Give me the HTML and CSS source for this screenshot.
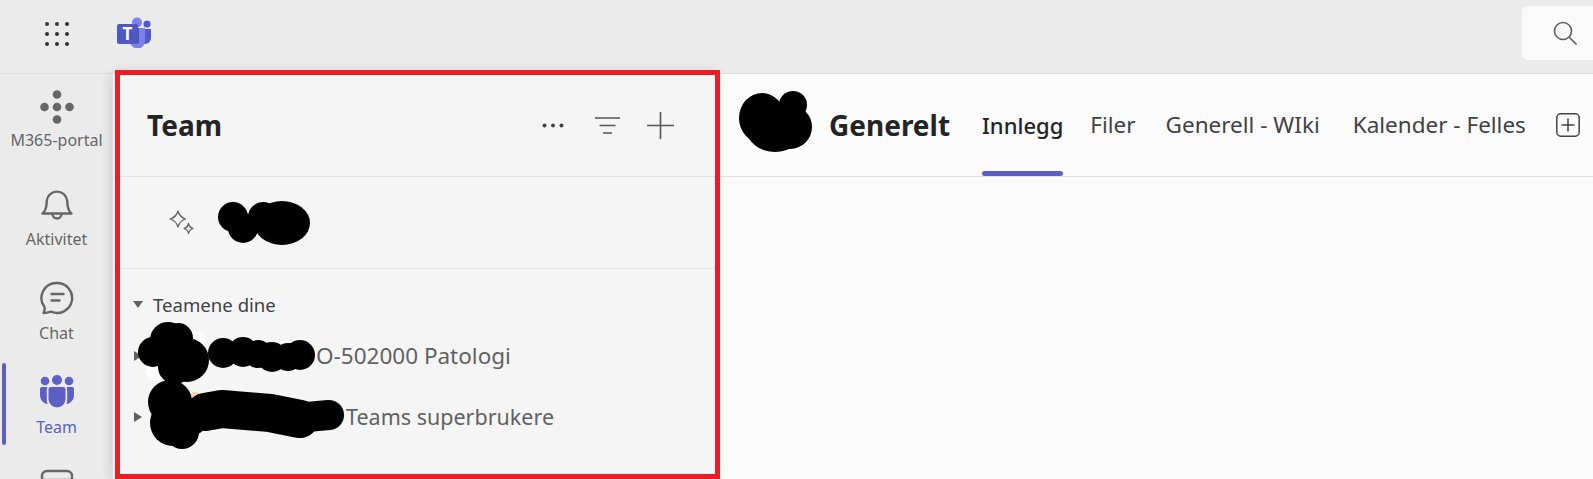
FILE: index.html
```html
<!DOCTYPE html>
<html lang="no">
<head>
<meta charset="utf-8">
<title>Microsoft Teams</title>
<link rel="stylesheet" href="styles.css">
</head>
<body>
<div class="app">
  <header class="topbar">
    <svg class="waffle" width="24" height="24" viewBox="0 0 24 24" fill="#333"><circle cx="2" cy="2" r="2"/><circle cx="12" cy="2" r="2"/><circle cx="22" cy="2" r="2"/><circle cx="2" cy="12" r="2"/><circle cx="12" cy="12" r="2"/><circle cx="22" cy="12" r="2"/><circle cx="2" cy="22" r="2"/><circle cx="12" cy="22" r="2"/><circle cx="22" cy="22" r="2"/></svg>
    <svg class="logo" width="35" height="31" viewBox="0 0 35 31"><circle cx="30" cy="7" r="3.600" fill="#5059c9"/><path d="M23 12h11v9a6 6 0 0 1-6 6h-5z" fill="#5059c9"/><circle cx="20" cy="5.500" r="5" fill="#7b83eb"/><path d="M11 11h17v12a7.500 7.500 0 0 1-15 2z" fill="#7b83eb"/><path d="M11 11h11v14a2 2 0 0 1-2 2h-7z" fill="#4b53bc"/><rect x="0" y="7" width="21" height="20" rx="2" fill="#4f57c0"/><text class="logo-t" x="10.500" y="23" text-anchor="middle">T</text></svg>
    <div class="search">
      <svg width="24" height="24" viewBox="0 0 24 24" fill="none" stroke="#616161" stroke-width="1.600"><circle cx="10" cy="10" r="8.500"/><path d="M16 16l7.500 7.500"/></svg>
    </div>
  </header>
  <div class="body">
    <nav class="rail">
      <div class="rail-item rail-item-first">
        <svg class="rail-icon" width="34" height="34" viewBox="0 0 34 34" fill="#666"><circle cx="17" cy="4.500" r="4.300"/><circle cx="4.500" cy="17" r="4.300"/><circle cx="17" cy="17" r="4.300"/><circle cx="29.500" cy="17" r="4.300"/><circle cx="17" cy="29.500" r="4.300"/></svg>
        <span class="rail-label">M365-portal</span>
      </div>
      <div class="rail-item">
        <svg class="rail-icon" width="34" height="34" viewBox="0 0 34 34" fill="none" stroke="#666" stroke-width="2.400" stroke-linejoin="round"><path d="M2.500 26.500c2-1.500 3.500-4 4-9l.3-4a10.300 10.300 0 0 1 20.400 0l.3 4c.5 5 2 7.500 4 9z"/><path d="M12.500 27a4.500 4.500 0 0 0 9 0"/></svg>
        <span class="rail-label">Aktivitet</span>
      </div>
      <div class="rail-item">
        <svg class="rail-icon" width="34" height="34" viewBox="0 0 34 34" fill="none" stroke="#666" stroke-width="2.400" stroke-linecap="round" stroke-linejoin="round"><path d="M17 2a15 15 0 1 1-6 28.700c-2 .7-5 1.300-7.500 1.300 1-2 1.500-4 1-6A15 15 0 0 1 17 2z"/><path d="M11.500 13h12M11.500 19.500h8"/></svg>
        <span class="rail-label">Chat</span>
      </div>
      <div class="rail-item rail-item-active">
        <svg class="rail-icon" width="34" height="34" viewBox="0 0 34 34" fill="#5b5fc7"><circle cx="5" cy="6" r="4.300"/><circle cx="17" cy="5" r="5"/><circle cx="29" cy="6" r="4.300"/><path d="M0 14a2 2 0 0 1 2-2h5.500c-.5 1-.7 2-.7 3v10c0 1.500.2 2.500.7 4C3 28.500 0 24.500 0 20z"/><path d="M34 14a2 2 0 0 0-2-2h-5.500c.5 1 .7 2 .7 3v10c0 1.500-.2 2.500-.7 4 4.500-.5 7.500-4.500 7.500-9z"/><path d="M11 12h12a2.500 2.500 0 0 1 2.500 2.500V24a8.500 8.500 0 0 1-17 0v-9.500A2.500 2.500 0 0 1 11 12z"/></svg>
        <span class="rail-label">Team</span>
      </div>
      <div class="rail-item rail-item-last">
        <svg class="rail-icon" width="34" height="34" viewBox="0 0 34 34" fill="none" stroke="#666" stroke-width="2.400"><rect x="2" y="3" width="30" height="28" rx="5"/><path d="M2 12h30"/></svg>
      </div>
    </nav>
    <aside class="panel">
      <div class="panel-head">
        <h1 class="panel-title">Team</h1>
        <div class="panel-actions">
          <svg width="22" height="5" viewBox="0 0 22 5" fill="#444"><circle cx="2.500" cy="2.500" r="2"/><circle cx="11" cy="2.500" r="2"/><circle cx="19.500" cy="2.500" r="2"/></svg>
          <svg class="action-filter" width="25" height="17" viewBox="0 0 25 17" stroke="#555" stroke-width="1.600"><path d="M0 1h25M4.500 8.500h16M8 16h9"/></svg>
          <svg class="action-plus" width="27" height="27" viewBox="0 0 27 27" stroke="#555" stroke-width="1.600"><path d="M0 13.500h27M13.500 0v27"/></svg>
        </div>
      </div>
      <div class="panel-feature">
        <svg width="25" height="25" viewBox="0 0 25 25" fill="none" stroke="#666" stroke-width="1.300" stroke-linejoin="round"><path d="M9 1c1 4 3 6.500 7.500 8C12 10.500 10 13 9 17 8 13 6 10.500 1 9c5-1.500 7-4 8-8z"/><path d="M19.500 13.500c.5 2.500 1.500 4 4.500 5-3 1-4 2-4.500 5-.5-3-1.500-4-4.500-5 3-1 4-2.500 4.500-5z"/></svg>
      </div>
      <div class="teams">
        <div class="section-row"><span class="tri-down"></span><span class="section-name">Teamene dine</span></div>
        <div class="team-row team-row-a"><span class="tri-right"></span><span class="team-name">O-502000 Patologi</span></div>
        <div class="team-row team-row-b"><span class="tri-right"></span><span class="team-name">Teams superbrukere</span></div>
      </div>
    </aside>
    <main class="main">
      <div class="main-head">
        <h2 class="channel">Generelt</h2>
        <div class="tabs">
          <div class="tab tab-active">Innlegg</div>
          <div class="tab tab-files">Filer</div>
          <div class="tab">Generell - WIki</div>
          <div class="tab tab-calendar">Kalender - Felles</div>
          <svg class="tab-add" width="24" height="24" viewBox="0 0 24 24" fill="none" stroke="#444" stroke-width="1.500"><rect x=".8" y=".8" width="22.400" height="22.400" rx="4"/><path d="M5.500 12h13M12 5.500v13"/></svg>
        </div>
      </div>
    </main>
  </div>
</div>
<svg class="scribbles" width="1593" height="479" viewBox="0 0 1593 479" aria-hidden="true">
  <g fill="#fff"><rect x="756" y="135" width="52" height="17"/><circle cx="197" cy="339" r="8"/><circle cx="155" cy="372" r="9"/></g>
  <g fill="#ecd9b0"><circle cx="195" cy="399" r="7"/><circle cx="155" cy="414" r="5"/></g>
  <g>
    <ellipse cx="762" cy="118" rx="23" ry="25"/><circle cx="793" cy="105" r="14"/><circle cx="790" cy="127" r="22"/><ellipse cx="775" cy="130" rx="28" ry="22"/>
    <circle cx="233" cy="217" r="15"/><circle cx="243" cy="228" r="15"/><circle cx="263" cy="217" r="15"/><ellipse cx="282" cy="223" rx="28" ry="22"/>
    <circle cx="168" cy="340" r="18"/><circle cx="178" cy="338" r="15"/><circle cx="153" cy="352" r="15"/><circle cx="187" cy="360" r="22"/><circle cx="175" cy="367" r="17"/>
    <circle cx="223" cy="353" r="15"/><circle cx="243" cy="352" r="15"/><circle cx="258" cy="354" r="14"/><circle cx="272" cy="357" r="15"/><circle cx="288" cy="357" r="14"/><circle cx="300" cy="355" r="15"/>
    <circle cx="170" cy="402" r="22"/><circle cx="173" cy="423" r="23"/><circle cx="182" cy="432" r="17"/><circle cx="190" cy="418" r="18"/>
  </g>
  <path class="band band-b" d="M205 412L222 409L270 413L300 419"/>
  <path class="band band-c" d="M295 418L329 415"/>
</svg>
<div class="highlight"></div>
</body>
</html>
```

FILE: styles.css
```css
* { box-sizing: border-box; }
html, body { margin: 0; height: 479px; overflow: hidden; }
body {
  position: relative;
  font-family: "Noto Sans", "Open Sans", sans-serif;
  color: #242424;
  background: #fafafa;
}
.app { display: flex; flex-direction: column; height: 479px; overflow: hidden; }

.topbar {
  flex: none;
  height: 74px;
  display: flex;
  align-items: flex-start;
  background: #ebebeb;
  border-bottom: 1px solid #dcdcdc;
}
.waffle { margin: 22px 0 0 45px; }
.logo { margin: 17px 0 0 48px; }
.logo-t { font: 700 17px "Noto Sans", sans-serif; fill: #fff; }
.search {
  margin: 6px 0 0 auto;
  width: 71px;
  height: 54px;
  padding: 15px 0 0 31px;
  background: #fafafa;
  border-radius: 6px 0 0 6px;
}

.body { flex: 1; display: flex; min-height: 0; }

.rail {
  flex: none;
  width: 113px;
  height: 405px;
  overflow: hidden;
  background: #ebebeb;
  padding-top: 16px;
  display: flex;
  flex-direction: column;
}
.rail-item {
  position: relative;
  height: 94px;
  flex: none;
  display: flex;
  flex-direction: column;
  align-items: center;
  color: #666;
}
.rail-item-first { height: 97px; }
.rail-item-last { height: 34px; margin-top: -1px; }
.rail-icon { flex: none; }
.rail-label { font-size: 16px; line-height: 20px; margin-top: 8px; }
.rail-item-first .rail-label { margin-top: 6px; }
.rail-item-active { color: #5b5fc7; }
.rail-item-active::before {
  content: "";
  position: absolute;
  left: 2px;
  top: -12px;
  width: 4px;
  height: 82px;
  border-radius: 2px;
  background: #5b5fc7;
}

.panel {
  flex: none;
  width: 602px;
  background: #f5f5f5;
  box-shadow: 0 0 12px rgba(0, 0, 0, .18);
  position: relative;
}
.panel-head {
  height: 103px;
  padding: 0 41px 0 34px;
  display: flex;
  align-items: center;
  justify-content: space-between;
  border-bottom: 1px solid #e0e0e0;
}
.panel-title { margin: 0; font-size: 28px; font-weight: 700; line-height: 38px; }
.panel-actions { display: flex; align-items: center; }
.action-filter { margin-left: 31px; }
.action-plus { margin-left: 27px; }
.panel-feature {
  height: 92px;
  padding: 33px 0 0 56px;
  border-bottom: 1px solid #e0e0e0;
}
.panel-feature svg { display: block; }
.teams { padding-top: 19px; }
.section-row { height: 32px; display: flex; align-items: center; padding-left: 20px; }
.section-name { font-size: 18.600px; margin-left: 10px; color: #424242; }
.tri-down {
  width: 0; height: 0;
  border-left: 5.500px solid transparent;
  border-right: 5.500px solid transparent;
  border-top: 7px solid #616161;
}
.tri-right {
  width: 0; height: 0;
  border-top: 5.500px solid transparent;
  border-bottom: 5.500px solid transparent;
  border-left: 8px solid #616161;
  flex: none;
}
.team-row { display: flex; align-items: center; height: 61px; padding-left: 21px; color: #616161; }
.team-row-a { margin-top: 5px; }
.team-row-a .team-name { margin-left: 174px; font-size: 22.500px; }
.team-row-b .team-name { margin-left: 204px; font-size: 21.500px; }

.main { flex: 1; min-width: 0; background: #fbfbfb; }
.main-head {
  height: 103px;
  padding: 0 0 0 114px;
  display: flex;
  align-items: center;
  border-bottom: 1px solid #e0e0e0;
}
.channel { margin: 0 32px 0 0; font-size: 28px; font-weight: 700; line-height: 38px; white-space: nowrap; }
.tabs { display: flex; align-items: center; gap: 30px; }
.tab {
  position: relative;
  font-size: 22.500px;
  line-height: 32px;
  color: #424242;
  white-space: nowrap;
}
.tab-files { margin-left: -3px; }
.tab-calendar { margin-left: 3px; }
.tab-active { font-size: 22px; font-weight: 500; color: #242424; }
.tab-active::after {
  content: "";
  position: absolute;
  left: 0;
  right: 0;
  bottom: -35px;
  height: 5px;
  border-radius: 3px;
  background: #5b5fc7;
}
.tab-add { flex: none; }

.scribbles { position: absolute; left: 0; top: 0; }
.band { fill: none; stroke: #000; stroke-linecap: round; stroke-linejoin: round; }
.band-b { stroke-width: 38px; }
.band-c { stroke-width: 30px; }
.highlight {
  position: absolute;
  left: 115px;
  top: 70px;
  width: 605px;
  height: 409px;
  border: 5px solid #ed1c24;
}
```
